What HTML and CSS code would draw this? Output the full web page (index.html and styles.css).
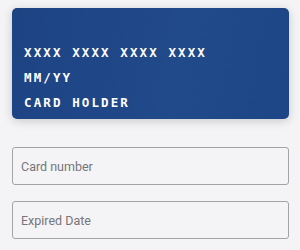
FILE: index.html
```html
<!DOCTYPE html>
<html lang="en">
<head>
    <meta charset="UTF-8">
    <meta name="viewport" content="width=device-width, initial-scale=1.0">
    <title>Card</title>
    <link rel="stylesheet" href="styles.css">
</head>
<body>
    <div class="page">
        <div class="card">
            <div class="card-line">XXXX XXXX XXXX XXXX</div>
            <div class="card-line">MM/YY</div>
            <div class="card-line">CARD HOLDER</div>
        </div>

        <div class="fields">
            <input type="text" class="field" placeholder="Card number">
            <input type="text" class="field" placeholder="Expired Date">
        </div>
    </div>
</body>
</html>
```

FILE: styles.css
```css
body { margin: 0; background-color: #f4f3f5; font-family: Roboto, "Liberation Sans", sans-serif; }
.page { padding: 8px 11px 0 12px; }
.card { box-sizing: border-box; height: 111px; padding: 32px 12px 0; border-radius: 5px; background: linear-gradient(100deg, #1d4383 0%, #214a8b 60%, #1d4687 100%); box-shadow: 0 2px 10px rgba(0, 0, 0, 0.18); color: #fff; }
.card-line { font-family: "DejaVu Sans Mono", monospace; font-weight: bold; font-size: 12.5px; line-height: 25px; letter-spacing: 2.1px; white-space: nowrap; }
.fields { display: flex; flex-direction: column; gap: 16px; margin-top: 28px; }
.field { box-sizing: border-box; width: 100%; height: 38px; padding: 0 8px; border: 1px solid #a3a2a6; border-radius: 3px; background: transparent; font-family: Roboto, sans-serif; font-size: 12.5px; color: #333; }
.field::placeholder { color: #77767a; }
```
